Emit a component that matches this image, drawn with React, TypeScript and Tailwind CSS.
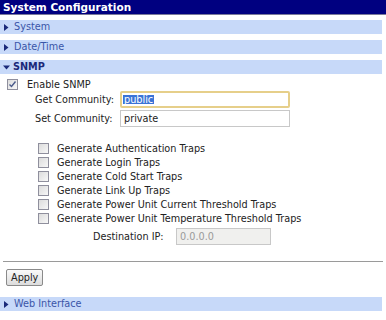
import React from 'react';

function Box({ checked }: { checked?: boolean }) {
  return (
    <span className="inline-flex h-[11px] w-[11px] shrink-0 items-center justify-center border border-[#8f8f9d] bg-gradient-to-br from-[#dcdcdc] to-[#f8f8f8]">
      {checked && (
        <svg width="9" height="9" viewBox="0 0 9 9">
          <path d="M1.5 4.5 L3.5 6.5 L7.5 1.5" fill="none" stroke="#4a5a8a" strokeWidth="1.4" />
        </svg>
      )}
    </span>
  );
}

function Bar({ label, open }: { label: string; open?: boolean }) {
  return (
    <div className="mr-[4px] flex h-[14px] items-center bg-[#c7d9f9] pl-[3px]">
      {open ? (
        <svg width="7" height="7" viewBox="0 0 7 7" className="mr-[3px]">
          <path d="M0 1.5 L7 1.5 L3.5 5.5 Z" fill="#1b2a7a" />
        </svg>
      ) : (
        <svg width="7" height="7" viewBox="0 0 7 7" className="mr-[4px]">
          <path d="M1 0 L5.5 3.5 L1 7 Z" fill="#1b2a7a" />
        </svg>
      )}
      <span className={open ? 'font-bold text-[#1b2a7a]' : 'text-[#3a55a8]'}>{label}</span>
    </div>
  );
}

const traps = [
  'Generate Authentication Traps',
  'Generate Login Traps',
  'Generate Cold Start Traps',
  'Generate Link Up Traps',
  'Generate Power Unit Current Threshold Traps',
  'Generate Power Unit Temperature Threshold Traps',
];

export default function App() {
  return (
    <div className="h-[320px] w-[386px] bg-white text-[9.7px] leading-none text-[#222] [font-family:'DejaVu_Sans',sans-serif]">
      <div className="flex h-[15px] items-center border-b border-[#7a7a9a] bg-[#000080] pl-[3px] text-[10.5px] font-bold text-white">
        System Configuration
      </div>
      <div className="flex flex-col gap-[6px] pt-[5px]">
        <Bar label="System" />
        <Bar label="Date/Time" />
        <Bar label="SNMP" open />
      </div>

      <div className="flex items-center gap-[9px] pl-[7px] pt-[5px]">
        <Box checked />
        <span>Enable SNMP</span>
      </div>

      <div className="mt-[1px] flex flex-col gap-[2px] pl-[35px]">
        <div className="flex items-center">
          <span className="w-[85px]">Get Community:</span>
          <div className="flex h-[17px] w-[170px] items-center rounded-[2px] border-2 border-[#e6cf8a] pl-[1px]">
            <span className="bg-[#3b73d6] px-[1px] text-white">public</span>
          </div>
        </div>
        <div className="flex items-center">
          <span className="w-[85px]">Set Community:</span>
          <div className="flex h-[17px] w-[170px] items-center border border-[#c8c8c8] pl-[3px]">private</div>
        </div>
      </div>

      <div className="mt-[16px] flex flex-col gap-[3px] pl-[38px]">
        {traps.map((t) => (
          <div key={t} className="flex h-[11px] items-center gap-[8px]">
            <Box />
            <span>{t}</span>
          </div>
        ))}
      </div>

      <div className="mt-[4px] flex items-center pl-[93px]">
        <span className="w-[83px]">Destination IP:</span>
        <div className="flex h-[17px] w-[95px] items-center border border-[#c8c8c8] bg-[#f0f0ee] pl-[3px] text-[#9a9a9a]">0.0.0.0</div>
      </div>

      <div className="mx-[3px] mt-[16px] border-t border-[#9a9a9a]" />

      <div className="pl-[6px] pt-[7px]">
        <button className="h-[17px] rounded-[2px] border border-[#8a8a8a] bg-gradient-to-b from-[#fafafa] to-[#dcdcdc] px-[4px] text-[9.7px] leading-none text-[#222]">
          Apply
        </button>
      </div>

      <div className="pt-[11px]">
        <Bar label="Web Interface" />
      </div>
    </div>
  );
}
